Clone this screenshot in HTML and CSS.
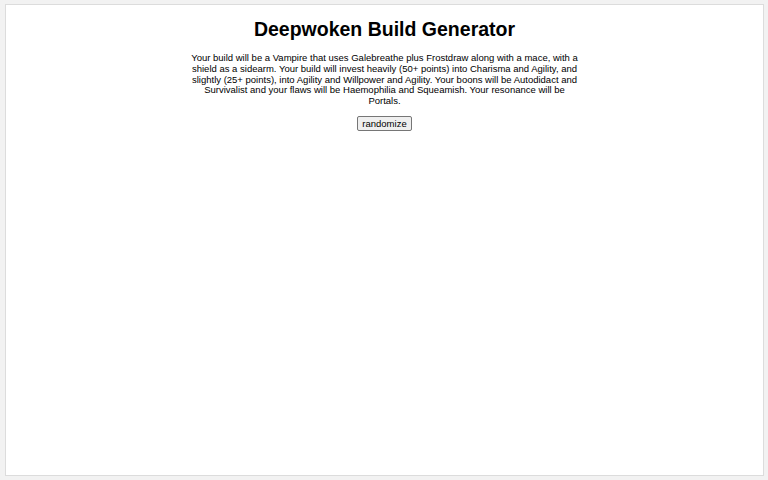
FILE: index.html
```html
<!DOCTYPE html>
<html lang="en">
<head>
<meta charset="utf-8">
<title>Deepwoken Build Generator</title>
<link rel="stylesheet" href="styles.css">
</head>
<body>
<div class="frame">
  <main class="page">
    <h1 class="title">Deepwoken Build Generator</h1>
    <p class="build">Your build will be a Vampire that uses Galebreathe plus Frostdraw along with a mace, with a shield as a sidearm. Your build will invest heavily (50+ points) into Charisma and Agility, and slightly (25+ points), into Agility and Willpower and Agility. Your boons will be Autodidact and Survivalist and your flaws will be Haemophilia and Squeamish. Your resonance will be Portals.</p>
    <button class="randomize" type="button">randomize</button>
  </main>
</div>
</body>
</html>
```
FILE: styles.css
```css
html, body {
  margin: 0;
  height: 100%;
}

body {
  background: #f2f2f2;
  font-family: "Liberation Sans", Arial, sans-serif;
}

.frame {
  box-sizing: border-box;
  height: 480px;
  padding: 4px 4px 4px 5px;
}

.page {
  box-sizing: border-box;
  height: 100%;
  background: #ffffff;
  border: 1px solid #dcdcdc;
  display: flex;
  flex-direction: column;
  align-items: center;
  padding-top: 13px;
}

.title {
  margin: 0;
  font-size: 19.5px;
  font-weight: bold;
  line-height: 22px;
  color: #000;
}

.build {
  margin: 13px 0 0;
  max-width: 392px;
  font-size: 9.5px;
  line-height: 10.8px;
  text-align: center;
  color: #000;
}

.randomize {
  margin-top: 9px;
  font-family: "Liberation Sans", Arial, sans-serif;
  font-size: 9.5px;
  padding: 1px 4px;
  background: #efefef;
  border: 1px solid #767676;
  border-radius: 2px;
  color: #000;
}
```
